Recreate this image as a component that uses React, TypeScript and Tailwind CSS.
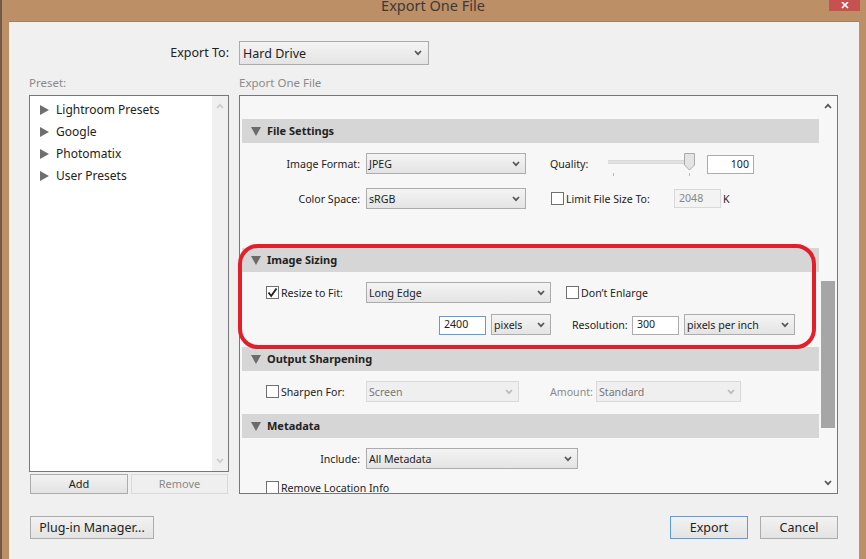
import React from "react";

const Chev = ({ c = "#555" }: { c?: string }) => (
  <svg width="8" height="6" viewBox="0 0 8 6" className="shrink-0">
    <path d="M1 1 L4 4.2 L7 1" fill="none" stroke={c} strokeWidth="1.7" />
  </svg>
);

const Select = ({ w, text, disabled }: { w: string; text: string; disabled?: boolean }) => (
  <div
    className={`${w} h-[21px] shrink-0 flex items-center justify-between pl-[2px] pr-[5px] border ${
      disabled
        ? "border-[#d9d9d9] bg-[#efefef] text-[#777]"
        : "border-[#acacac] bg-gradient-to-b from-[#f4f4f4] to-[#e4e4e4] text-[#222]"
    }`}
  >
    <span>{text}</span>
    <Chev c={disabled ? "#bbb" : "#555"} />
  </div>
);

const Check = ({ on }: { on?: boolean }) => (
  <div className="w-[13px] h-[13px] shrink-0 border border-[#707070] bg-white flex items-center justify-center">
    {on && (
      <svg width="11" height="11" viewBox="0 0 11 11">
        <path d="M1.5 5.5 L4.2 9 L9.5 1.5" fill="none" stroke="#222" strokeWidth="1.9" />
      </svg>
    )}
  </div>
);

const Header = ({ title }: { title: string }) => (
  <div className="h-6 bg-[#d6d6d6] flex items-center pl-[9px] gap-[6px] shrink-0 w-[577px]">
    <svg width="10" height="9" viewBox="0 0 10 9">
      <path d="M0 0 H10 L5 9 Z" fill="#6b6b6b" />
    </svg>
    <span className="font-bold text-[#222] text-[11px] !mt-0">{title}</span>
  </div>
);

const Field = ({ w, text, muted, align = "text-right" }: { w: string; text: string; muted?: boolean; align?: string }) => (
  <div
    className={`${w} h-[19px] shrink-0 border flex items-center px-[4px] ${align} ${
      muted ? "border-[#d9d9d9] bg-[#f3f3f3] text-[#888]" : "border-[#acacac] bg-white text-[#222]"
    }`}
  >
    <span className="w-full !mt-0">{text}</span>
  </div>
);

const Btn = ({ w, text, cls = "" }: { w: string; text: string; cls?: string }) => (
  <div
    className={`${w} flex items-center justify-center pt-[1px] border bg-gradient-to-b from-[#f2f2f2] to-[#e3e3e3] ${cls}`}
  >
    {text}
  </div>
);

const presets = ["Lightroom Presets", "Google", "Photomatix", "User Presets"];

export default function App() {
  return (
    <div
      className="w-[866px] h-[559px] bg-[#bc8f66] overflow-hidden flex flex-col relative border-l-2 border-[#6f5a48] text-[12px] text-[#222]"
      style={{ fontFamily: '"Noto Sans", sans-serif' }}
    >
      <div className="h-[21px] shrink-0 flex justify-center relative">
        <span className="text-[14.5px] leading-none text-[#3d3a38] -mt-[2px] -ml-[2px]">Export One File</span>
        <div className="absolute left-[827px] top-0 w-[31px] h-[11px] bg-[#c75050] flex items-center justify-center">
          <svg width="8" height="7" viewBox="0 0 8 7">
            <path d="M1 0 L7 6 M7 0 L1 6" stroke="#fff" strokeWidth="1.6" />
          </svg>
        </div>
      </div>

      <div className="ml-[7px] w-[850px] flex-1 bg-[#f0f0f0] border-t border-[#a67f5c] flex flex-col pl-[20px] pr-[20px] relative">
        {/* Export To */}
        <div className="flex items-center mt-[19px] h-[24px] shrink-0 text-[12.5px]">
          <span className="w-[200px] text-right mt-[1px]">Export To:</span>
          <div className="ml-[10px] w-[190px] h-[24px] border border-[#acacac] bg-gradient-to-b from-[#f4f4f4] to-[#e4e4e4] flex items-center justify-between pl-[3px] pr-[6px]">
            <span className="mt-[2px]">Hard Drive</span>
            <Chev />
          </div>
        </div>

        <div className="flex mt-[11px] h-[14px] shrink-0 items-center text-[#8a8a8a] text-[11.5px]">
          <span className="w-[210px]">Preset:</span>
          <span>Export One File</span>
        </div>

        <div className="flex mt-[5px] gap-[10px] shrink-0">
          {/* Left column */}
          <div className="w-[200px] flex flex-col">
            <div className="h-[377px] border border-[#777] bg-white flex">
              <div className="flex-1 flex flex-col pt-[5px] pl-[10px] gap-[4px] text-[12px]">
                {presets.map((p) => (
                  <div key={p} className="h-[18px] flex items-center gap-[7px]">
                    <svg width="9" height="10" viewBox="0 0 9 10">
                      <path d="M0 0 L9 5 L0 10 Z" fill="#6f6f6f" />
                    </svg>
                    <span>{p}</span>
                  </div>
                ))}
              </div>
              <div className="w-[16px] bg-[#f0f0f0] flex flex-col justify-between items-center py-[7px]">
                <svg width="8" height="6" viewBox="0 0 8 6">
                  <path d="M1 5 L4 1.8 L7 5" fill="none" stroke="#ccc" strokeWidth="1.7" />
                </svg>
                <Chev c="#ccc" />
              </div>
            </div>
            <div className="flex mt-[2px] ml-[1px] gap-[3px] h-[20px] text-[11px]">
              <Btn w="w-[98px]" text="Add" cls="border-[#acacac]" />
              <div className="w-[97px] flex items-center justify-center border border-[#d9d9d9] bg-[#efefef] text-[#8a8a8a]">
                Remove
              </div>
            </div>
          </div>

          {/* Right panel */}
          <div className="w-[599px] h-[399px] border border-[#777] bg-[#f7f7f7] flex overflow-hidden">
            <div className="w-[580px] pl-[2px] pt-[23px] flex flex-col shrink-0 overflow-hidden text-[10.6px] [&_span]:mt-[2px]">
              <Header title="File Settings" />
              <div className="h-[105px] shrink-0 pt-[10px] flex flex-col gap-[14px]">
                <div className="flex items-center h-[21px]">
                  <span className="w-[118px] text-right">Image Format:</span>
                  <div className="ml-[6px]"><Select w="w-[160px]" text="JPEG" /></div>
                  <span className="ml-[24px] w-[58px]">Quality:</span>
                  <div className="w-[90px] h-[24px] relative shrink-0 mt-[2px]">
                    <div className="absolute left-0 right-[10px] top-[7px] h-[4px] bg-[#e2e2e2] border-y border-[#d8d8d8]" />
                    <svg className="absolute left-[76px] top-0" width="11" height="18" viewBox="0 0 11 18">
                      <path d="M.5.5 H10.5 V12 L5.5 17 L.5 12 Z" fill="#e4e4e4" stroke="#aaa" />
                    </svg>
                    <div className="absolute left-[5px] top-[20px] w-px h-[3px] bg-[#bbb]" />
                    <div className="absolute left-[81px] top-[20px] w-px h-[3px] bg-[#bbb]" />
                  </div>
                  <div className="ml-[9px] mt-[2px]"><Field w="w-[47px]" text="100" /></div>
                </div>
                <div className="flex items-center h-[21px]">
                  <span className="w-[118px] text-right">Color Space:</span>
                  <div className="ml-[6px]"><Select w="w-[160px]" text="sRGB" /></div>
                  <div className="ml-[25px]"><Check /></div>
                  <span className="ml-[2px] w-[108px]">Limit File Size To:</span>
                  <Field w="w-[47px]" text="2048" muted align="text-left" />
                  <span className="ml-[2px]">K</span>
                </div>
              </div>

              <Header title="Image Sizing" />
              <div className="h-[75px] shrink-0 pt-[10px] flex flex-col gap-[11px]">
                <div className="flex items-center h-[21px]">
                  <div className="ml-[24px]"><Check on /></div>
                  <span className="ml-[2px] w-[85px]">Resize to Fit:</span>
                  <Select w="w-[185px]" text="Long Edge" />
                  <div className="ml-[15px]"><Check /></div>
                  <span className="ml-[2px]">Don’t Enlarge</span>
                </div>
                <div className="flex items-center h-[21px]">
                  <div className="ml-[197px] mt-[1px] w-[47px] h-[19px] border border-[#569de5] bg-white flex items-center pl-[4px]">2400</div>
                  <div className="ml-[5px]"><Select w="w-[60px]" text="pixels" /></div>
                  <span className="ml-[21px] w-[54px]">Resolution:</span>
                  <div className="ml-[6px] mt-[1px]"><Field w="w-[47px]" text="300" align="text-left" /></div>
                  <div className="ml-[5px]"><Select w="w-[111px]" text="pixels per inch" /></div>
                </div>
              </div>

              <Header title="Output Sharpening" />
              <div className="h-[43px] shrink-0 pt-[10px]">
                <div className="flex items-center h-[21px]">
                  <div className="ml-[24px]"><Check /></div>
                  <span className="ml-[2px] w-[85px]">Sharpen For:</span>
                  <Select w="w-[153px]" text="Screen" disabled />
                  <span className="ml-[31px] w-[46px] text-[#8a8a8a]">Amount:</span>
                  <Select w="w-[145px]" text="Standard" disabled />
                </div>
              </div>

              <Header title="Metadata" />
              <div className="pt-[10px] flex flex-col gap-[12px]">
                <div className="flex items-center h-[21px] shrink-0">
                  <span className="w-[118px] text-right">Include:</span>
                  <div className="ml-[6px]"><Select w="w-[212px]" text="All Metadata" /></div>
                </div>
                <div className="flex items-center h-[13px] shrink-0">
                  <div className="ml-[24px]"><Check /></div>
                  <span className="ml-[2px]">Remove Location Info</span>
                </div>
              </div>
            </div>

            <div className="flex-1 flex flex-col items-center justify-between py-[7px] relative -ml-[1px]">
              <svg width="8" height="6" viewBox="0 0 8 6">
                <path d="M1 5 L4 1.8 L7 5" fill="none" stroke="#555" strokeWidth="1.7" />
              </svg>
              <div className="absolute left-[2px] right-[2px] top-[185px] h-[147px] bg-[#a6a6a6]" />
              <Chev />
            </div>
          </div>
        </div>

        {/* Bottom */}
        <div className="flex mt-[22px] mr-[1px] h-[23px] shrink-0 text-[12.5px]">
          <Btn w="w-[124px] ml-[1px]" text="Plug-in Manager..." cls="border-[#acacac]" />
          <div className="flex-1" />
          <Btn w="w-[78px]" text="Export" cls="border-[#569de5]" />
          <Btn w="w-[78px] ml-[12px]" text="Cancel" cls="border-[#acacac]" />
        </div>

        {/* Red annotation */}
        <div className="absolute left-[229px] top-[222px] w-[578px] h-[105px] border-[4px] border-[#e1202c] rounded-[20px]" />
      </div>
    </div>
  );
}
